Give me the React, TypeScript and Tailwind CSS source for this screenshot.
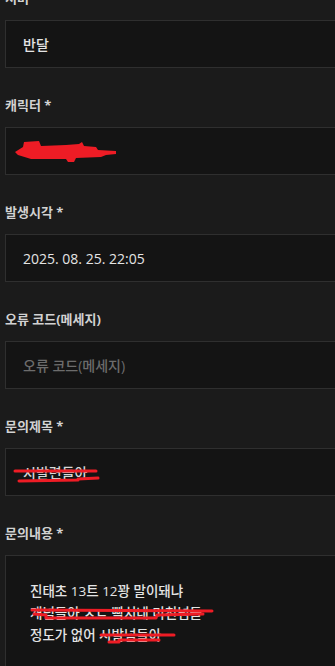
import React from 'react';

const font = { fontFamily: '"Open Sans", "Noto Sans CJK KR", sans-serif' };

interface FieldProps {
  label: string;
  required?: boolean;
  children: React.ReactNode;
}

const Field: React.FC<FieldProps> = ({ label, required, children }) => (
  <div className="flex flex-col">
    <label className="text-[13px] font-bold leading-[20px] text-[#d2d2d2]">
      {label}
      {required && ' *'}
    </label>
    <div className="mt-[12px]">{children}</div>
  </div>
);

const Box: React.FC<{ children?: React.ReactNode; muted?: boolean }> = ({ children, muted }) => (
  <div
    className={`relative flex h-[48px] items-center border border-[#2f2f2f] bg-[#141414] px-[17px] text-[14px] font-medium ${
      muted ? 'text-[#6c6c6c]' : 'text-[#e4e4e4]'
    }`}
  >
    {children}
  </div>
);

const Strike: React.FC<{ d: string; w?: number }> = ({ d, w = 3 }) => (
  <path d={d} fill="none" stroke="#ee1c25" strokeWidth={w} strokeLinecap="round" strokeLinejoin="round" />
);

export default function App() {
  return (
    <div className="h-[666px] w-full overflow-hidden bg-[#1b1b1b]" style={font}>
      <div className="-mt-[12px] flex w-[420px] flex-col gap-[27px] pl-[5px]">
        <Field label="서버" required>
          <Box>반달</Box>
        </Field>

        <Field label="캐릭터" required>
          <Box>
            <svg className="pointer-events-none absolute left-0 top-0" width="130" height="48">
              <path
                d="M9 24 L17 19 L18 14 L33 13 L35 18 L60 17 L73 16 L76 14 L78 18 L90 19 L92 22 L110 23 L110 26 L100 27 L95 29 L70 30 L68 34 L62 34 L60 31 L25 31 L12 27 Z"
                fill="#ee1c25"
              />
            </svg>
          </Box>
        </Field>

        <Field label="발생시각" required>
          <Box>2025. 08. 25. 22:05</Box>
        </Field>

        <Field label="오류 코드(메세지)">
          <Box muted>오류 코드(메세지)</Box>
        </Field>

        <Field label="문의제목" required>
          <Box>
            <span className="text-[#d8d8d8]">시발련들아</span>
            <svg className="pointer-events-none absolute left-0 top-0" width="130" height="48">
              <Strike d="M9 22 L90 22" />
              <Strike d="M13 32 L72 31 M72 30 L92 29" />
            </svg>
          </Box>
        </Field>

        <Field label="문의내용" required>
          <div className="relative h-[200px] border border-[#2f2f2f] bg-[#141414] px-[24px] pt-[24px] text-[13.5px] font-medium leading-[22px] text-[#e4e4e4]">
            <p>진태초 13트 12꽝 말이돼냐</p>
            <p>개넘들아 ㅈㄴ 빡치네 미친넘들</p>
            <p>정도가 없어 시발넘들아</p>
            <svg className="pointer-events-none absolute left-0 top-0" width="240" height="100">
              <Strike d="M26 54 L206 55" />
              <Strike d="M28 58 L40 59 L40 62 L150 62 L151 59 L197 58" />
              <Strike d="M95 79 L168 79" />
              <Strike d="M103 86 L113 86 L113 84 L153 84" />
            </svg>
          </div>
        </Field>
      </div>
    </div>
  );
}
